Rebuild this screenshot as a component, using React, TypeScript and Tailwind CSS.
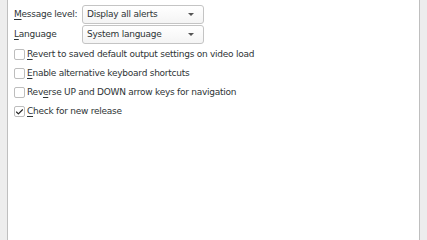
import { Check } from 'lucide-react';

function Combo({ value }: { value: string }) {
  return (
    <div className="flex h-[19px] w-[122px] items-center justify-between rounded-[3px] border border-[#c4c4c4] bg-gradient-to-b from-white to-[#f4f4f4] pl-[4px] pr-[9px]">
      <span>{value}</span>
      <span className="h-0 w-0 border-x-[3px] border-t-[3px] border-x-transparent border-t-[#555]" />
    </div>
  );
}

function Option({ label, mnemonic, checked }: { label: string; mnemonic: number; checked?: boolean }) {
  return (
    <div className="flex h-[19px] items-center gap-[2px]">
      <div className="flex h-[11px] w-[11px] items-center justify-center rounded-[2px] border border-[#bdbdbd] bg-white">
        {checked && <Check className="h-[10px] w-[10px] text-[#222]" strokeWidth={3} />}
      </div>
      <span>
        {label.slice(0, mnemonic)}
        <span className="underline underline-offset-2">{label[mnemonic]}</span>
        {label.slice(mnemonic + 1)}
      </span>
    </div>
  );
}

export default function App() {
  return (
    <div className="h-[240px] w-[427px] overflow-hidden bg-[#ededed] px-[7px] font-['DejaVu_Sans',sans-serif] text-[9px] tracking-[-0.25px] text-[#2e3436]">
      <div className="h-[260px] border-x border-b border-[#bfbfbf] bg-white pl-[6px] pt-[5px]">
        <div className="grid grid-cols-[68px_auto] items-center gap-y-[1px]">
          <span>
            <span className="underline underline-offset-2">M</span>essage level:
          </span>
          <Combo value="Display all alerts" />
          <span>
            <span className="underline underline-offset-2">L</span>anguage
          </span>
          <Combo value="System language" />
        </div>
        <div className="mt-[1px] flex flex-col">
          <Option label="Revert to saved default output settings on video load" mnemonic={0} />
          <Option label="Enable alternative keyboard shortcuts" mnemonic={0} />
          <Option label="Reverse UP and DOWN arrow keys for navigation" mnemonic={3} />
          <Option label="Check for new release" mnemonic={0} checked />
        </div>
      </div>
    </div>
  );
}
